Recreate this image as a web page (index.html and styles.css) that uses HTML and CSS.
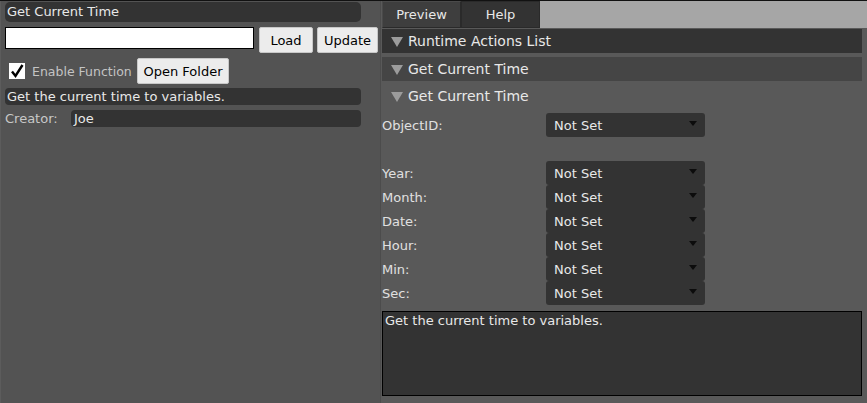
FILE: index.html
```html
<!DOCTYPE html>
<html lang="en">
  <head>
    <meta charset="UTF-8" />
    <title>Get Current Time</title>
    <link rel="stylesheet" href="styles.css">
  </head>
  <body>
    <div class="app">
      <div class="left">
        <div class="title-bar">Get Current Time</div>

        <div class="file-row">
          <input type="text" class="path-input" value="" />
          <button class="btn btn-load">Load</button>
          <button class="btn btn-update">Update</button>
        </div>

        <div class="enable-row">
          <span class="check">
            <svg width="16" height="16" viewBox="0 0 16 16">
              <path d="M3 8.5 L6.5 13 L13.5 2" fill="none" stroke="#000" stroke-width="2.4" />
            </svg>
          </span>
          <span class="enable-label">Enable Function</span>
          <button class="btn btn-folder">Open Folder</button>
        </div>

        <div class="desc-bar">Get the current time to variables.</div>

        <div class="creator-row">
          <span class="creator-label">Creator:</span>
          <span class="creator-field">Joe</span>
        </div>
      </div>

      <div class="right">
        <div class="tabs">
          <div class="tab tab-active">Preview</div>
          <div class="tab">Help</div>
        </div>

        <div class="section-head head-list">
          <svg class="tri" width="12" height="10" viewBox="0 0 12 10"><polygon points="0,0 12,0 6,10" /></svg>
          <span>Runtime Actions List</span>
        </div>
        <div class="section-head head-item">
          <svg class="tri" width="12" height="10" viewBox="0 0 12 10"><polygon points="0,0 12,0 6,10" /></svg>
          <span>Get Current Time</span>
        </div>
        <div class="section-head head-sub">
          <svg class="tri" width="12" height="10" viewBox="0 0 12 10"><polygon points="0,0 12,0 6,10" /></svg>
          <span>Get Current Time</span>
        </div>

        <div class="fields">
          <div class="field-row">
            <span class="field-label">ObjectID:</span>
            <div class="select"><span>Not Set</span><i class="arrow"></i></div>
          </div>
          <div class="field-row"></div>
          <div class="field-row">
            <span class="field-label">Year:</span>
            <div class="select"><span>Not Set</span><i class="arrow"></i></div>
          </div>
          <div class="field-row">
            <span class="field-label">Month:</span>
            <div class="select"><span>Not Set</span><i class="arrow"></i></div>
          </div>
          <div class="field-row">
            <span class="field-label">Date:</span>
            <div class="select"><span>Not Set</span><i class="arrow"></i></div>
          </div>
          <div class="field-row">
            <span class="field-label">Hour:</span>
            <div class="select"><span>Not Set</span><i class="arrow"></i></div>
          </div>
          <div class="field-row">
            <span class="field-label">Min:</span>
            <div class="select"><span>Not Set</span><i class="arrow"></i></div>
          </div>
          <div class="field-row">
            <span class="field-label">Sec:</span>
            <div class="select"><span>Not Set</span><i class="arrow"></i></div>
          </div>
        </div>

        <div class="help-box">Get the current time to variables.</div>
      </div>
    </div>
  </body>
</html>
```

FILE: styles.css
```css
* {
  box-sizing: border-box;
}

body {
  margin: 0;
  background: #535353;
  font-family: "DejaVu Sans", sans-serif;
  font-size: 13px;
  color: #e8e8e8;
}

.app {
  display: flex;
  height: 403px;
  border-top: 1px solid #111;
}

/* left panel */
.left {
  width: 380px;
  padding: 1px 0 0 4px;
  border-left: 1px solid #5c5c5c;
}
.title-bar {
  width: 356px;
  height: 20px;
  line-height: 20px;
  padding-left: 2px;
  background: #333;
  border-radius: 5px;
}
.file-row {
  display: flex;
  align-items: flex-start;
  margin-top: 5px;
}
.path-input {
  width: 249px;
  height: 22px;
  margin: 0;
  border: 1px solid #000;
  background: #fff;
}
.btn {
  height: 26px;
  margin: 0;
  padding: 0;
  font-family: "DejaVu Sans", sans-serif;
  font-size: 13px;
  color: #000;
  background: #ececec;
  border: 1px solid #c8c8c8;
  border-radius: 2px;
}
.btn-load {
  width: 54px;
  margin-left: 5px;
}
.btn-update {
  width: 61px;
  margin-left: 4px;
}
.enable-row {
  display: flex;
  align-items: center;
  margin-top: 5px;
  height: 26px;
}
.check {
  display: flex;
  width: 16px;
  height: 16px;
  margin-left: 4px;
  background: #fff;
}
.enable-label {
  width: 112px;
  padding-left: 7px;
  font-size: 12.5px;
  color: #c4c4c4;
}
.btn-folder {
  width: 92px;
}
.desc-bar {
  width: 356px;
  height: 17px;
  line-height: 17px;
  margin-top: 4px;
  padding-left: 2px;
  background: #333;
  border-radius: 4px;
}
.creator-row {
  display: flex;
  margin-top: 5px;
  height: 17px;
  line-height: 17px;
}
.creator-label {
  width: 66px;
  color: #c8c8c8;
}
.creator-field {
  width: 290px;
  padding-left: 3px;
  background: #333;
  border-radius: 4px;
}

/* right panel */
.right {
  flex: 1;
  padding: 0 5px 0 1px;
  background: #595959;
  border-left: 1px solid #4c4c4c;
}
.tabs {
  display: flex;
  height: 27px;
  margin-right: -5px;
  background: #a6a6a6;
}
.tab {
  width: 79px;
  line-height: 25px;
  text-align: center;
  background: #333;
  border: 1px solid #2a2a2a;
}
.tab-active {
  background: #3e3e3e;
  border-color: #4a4a4a #2a2a2a #2a2a2a #4a4a4a;
}
.section-head {
  display: flex;
  align-items: center;
  height: 24px;
  font-size: 14px;
}
.section-head .tri {
  margin: 1px 5px 0 9px;
  fill: #9c9c9c;
}
.head-list {
  margin-top: 1px;
  background: #333;
}
.head-item {
  margin-top: 4px;
  background: #454545;
}
.head-sub {
  margin-top: 4px;
  height: 22px;
}
.fields {
  margin-top: 6px;
}
.field-row {
  display: flex;
  align-items: center;
  height: 24px;
}
.field-label {
  width: 164px;
  color: #e0e0e0;
}
.select {
  display: flex;
  align-items: center;
  width: 159px;
  height: 24px;
  padding: 0 8px;
  background: #333;
  border-radius: 3px;
}
.arrow {
  margin: -4px 0 0 auto;
  border-left: 4px solid transparent;
  border-right: 4px solid transparent;
  border-top: 5px solid #0c0c0c;
}
.help-box {
  height: 85px;
  margin-top: 6px;
  padding: 1px 2px;
  background: #333;
  border: 1px solid #000;
}
```
